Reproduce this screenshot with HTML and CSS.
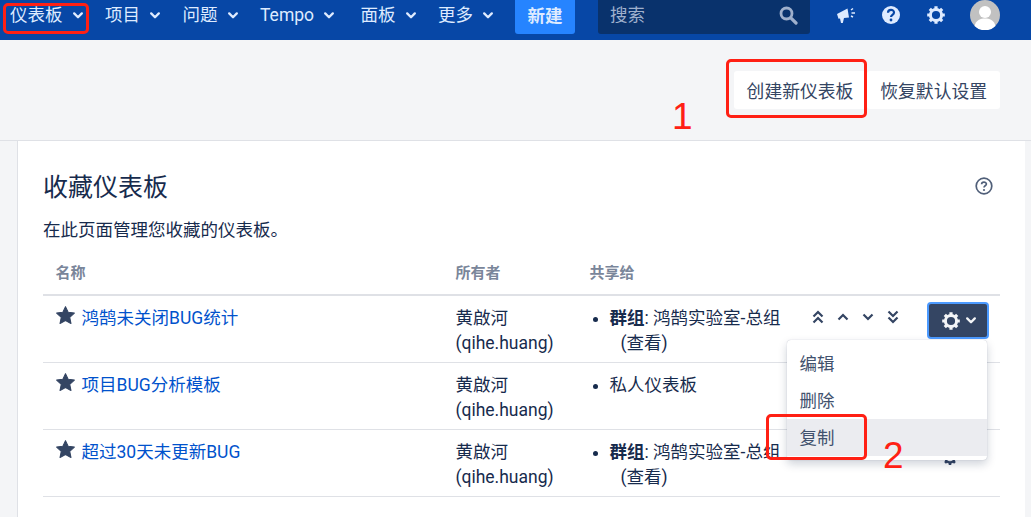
FILE: index.html
```html
<!DOCTYPE html>
<html lang="zh-CN">
<head>
    <meta charset="UTF-8">
    <title>收藏仪表板</title>
    <link rel="stylesheet" href="styles.css">
</head>
<body>
    <svg class="defs" width="0" height="0" aria-hidden="true">
        <symbol id="chev" viewBox="0 0 10 7"><path d="M1.2 1.4 5 5.2l3.8-3.8" fill="none" stroke="currentColor" stroke-width="2.3" stroke-linecap="round" stroke-linejoin="round"/></symbol>
        <symbol id="gear" viewBox="0 0 20 20">
            <circle cx="10" cy="10" r="5.6" fill="none" stroke="currentColor" stroke-width="3"/>
            <path d="M10 1.2v3M10 15.8v3M1.2 10h3M15.8 10h3M3.8 3.8 5.9 5.9M14.1 14.1l2.1 2.1M16.2 3.8l-2.1 2.1M5.9 14.1l-2.1 2.1" stroke="currentColor" stroke-width="3.2"/>
        </symbol>
        <symbol id="star" viewBox="0 0 18 18"><path d="M9 .6l2.5 5.4 5.9.7-4.4 4 1.2 5.9L9 13.7l-5.2 2.9L5 10.7.6 6.7l5.900-.7z" fill="currentColor" stroke="currentColor" stroke-width="1" stroke-linejoin="round"/></symbol>
    </svg>

    <!-- Top navigation -->
    <nav class="topnav">
        <a class="nav-item">仪表板<svg class="chev"><use href="#chev"/></svg></a>
        <a class="nav-item">项目<svg class="chev"><use href="#chev"/></svg></a>
        <a class="nav-item">问题<svg class="chev"><use href="#chev"/></svg></a>
        <a class="nav-item">Tempo<svg class="chev"><use href="#chev"/></svg></a>
        <a class="nav-item nav-panel">面板<svg class="chev"><use href="#chev"/></svg></a>
        <a class="nav-item">更多<svg class="chev"><use href="#chev"/></svg></a>
        <button class="new-btn">新建</button>
        <div class="search">
            <span>搜索</span>
            <svg width="20" height="20" viewBox="0 0 20 20"><circle cx="8.5" cy="8.5" r="5.5" fill="none" stroke="currentColor" stroke-width="2.8"/><path d="M12.8 12.8 18 18" stroke="currentColor" stroke-width="3.2" stroke-linecap="round"/></svg>
        </div>
        <div class="nav-icons">
            <svg width="20" height="20" viewBox="0 0 20 20"><path d="M1 9 11.500 3.500l1.500 9-5 .5L6.800 18H5L4 13.500l-1.500.2z" fill="currentColor"/><path d="M15 5 17 3.500M15.500 8H19M15 11l2 1" stroke="currentColor" stroke-width="1.500" fill="none"/></svg>
            <svg width="20" height="20" viewBox="0 0 20 20"><circle cx="10" cy="10" r="9" fill="currentColor"/><path d="M7 7.800C7 3.800 13 4 13 7.500c0 2.300-3 2.300-3 4.500" fill="none" stroke="#0747a6" stroke-width="2.200"/><circle cx="10" cy="15" r="1.400" fill="#0747a6"/></svg>
            <svg width="20" height="20"><use href="#gear"/></svg>
            <svg class="avatar" width="30" height="30" viewBox="0 0 30 30"><circle cx="15" cy="15" r="15" fill="#c1c1c1"/><circle cx="15" cy="12" r="6" fill="#fff"/><path d="M4.500 26c1.500-6 6-7.500 10.500-7.500S24 20 25.500 26A15 15 0 0 1 4.500 26z" fill="#fff"/></svg>
        </div>
    </nav>

    <!-- Page header with the two actions -->
    <header class="page-head">
        <button class="head-btn">创建新仪表板</button>
        <button class="head-btn">恢复默认设置</button>
    </header>

    <div class="layout">
        <div class="side"></div>
        <main class="main">
            <div class="title-row">
                <h1>收藏仪表板</h1>
                <svg class="help" width="18" height="18" viewBox="0 0 18 18"><circle cx="9" cy="9" r="7.8" fill="none" stroke="currentColor" stroke-width="1.7"/><path d="M6.600 7.200C6.600 4.300 11.400 4.500 11.400 7c0 1.800-2.400 1.800-2.400 3.500" fill="none" stroke="currentColor" stroke-width="1.7"/><circle cx="9" cy="13" r="1.100" fill="currentColor"/></svg>
            </div>
            <p class="desc">在此页面管理您收藏的仪表板。</p>

            <table class="boards">
                <thead>
                    <tr><th class="col-name">名称</th><th class="col-owner">所有者</th><th class="col-share">共享给</th><th class="col-order"></th><th class="col-op"></th></tr>
                </thead>
                <tbody>
                    <tr>
                        <td class="name-cell"><svg class="star"><use href="#star"/></svg><a>鸿鹄未关闭BUG统计</a></td>
                        <td>黄啟河<br>(qihe.huang)</td>
                        <td><ul><li><b>群组</b>: 鸿鹄实验室-总组<span class="perm">(查看)</span></li></ul></td>
                        <td>
                            <div class="order">
                                <svg viewBox="0 0 12 14"><path d="M1.500 6.500 6 2l4.500 4.500M1.500 12.500 6 8l4.500 4.500" fill="none" stroke="currentColor" stroke-width="2.200"/></svg>
                                <svg viewBox="0 0 12 14"><path d="M1.500 9.500 6 5l4.500 4.500" fill="none" stroke="currentColor" stroke-width="2.200"/></svg>
                                <svg viewBox="0 0 12 14"><path d="M1.500 4.500 6 9l4.500-4.500" fill="none" stroke="currentColor" stroke-width="2.200"/></svg>
                                <svg viewBox="0 0 12 14"><path d="M1.500 1.500 6 6l4.500-4.500M1.500 7.500 6 12l4.500-4.500" fill="none" stroke="currentColor" stroke-width="2.200"/></svg>
                            </div>
                        </td>
                        <td class="op-cell">
                            <button class="gear-btn"><svg class="gear-ico"><use href="#gear"/></svg><svg class="chev"><use href="#chev"/></svg></button>
                            <div class="menu">
                                <a>编辑</a>
                                <a>删除</a>
                                <a class="hover">复制</a>
                            </div>
                        </td>
                    </tr>
                    <tr>
                        <td class="name-cell"><svg class="star"><use href="#star"/></svg><a>项目BUG分析模板</a></td>
                        <td>黄啟河<br>(qihe.huang)</td>
                        <td><ul><li>私人仪表板</li></ul></td>
                        <td></td>
                        <td></td>
                    </tr>
                    <tr>
                        <td class="name-cell"><svg class="star"><use href="#star"/></svg><a>超过30天未更新BUG</a></td>
                        <td>黄啟河<br>(qihe.huang)</td>
                        <td><ul><li><b>群组</b>: 鸿鹄实验室-总组<span class="perm">(查看)</span></li></ul></td>
                        <td></td>
                        <td class="op-cell"><svg class="gear-plain"><use href="#gear"/></svg></td>
                    </tr>
                </tbody>
            </table>
        </main>
        <div class="gutter"></div>
    </div>

    <!-- Red annotations on top of the screenshot -->
    <div class="mark mark-nav"></div>
    <div class="mark mark-create"></div>
    <div class="mark mark-copy"></div>
    <div class="num num-1">1</div>
    <div class="num num-2">2</div>
</body>
</html>
```

FILE: styles.css
```css
html, body {
    margin: 0;
    padding: 0;
}

body {
    position: relative;
    width: 1031px;
    height: 517px;
    overflow: hidden;
    font-family: Roboto, "Noto Sans CJK SC", sans-serif;
    font-size: 17.5px;
    line-height: 25px;
    color: #172b4d;
    background-color: #fff;
}

.defs {
    position: absolute;
}

/* Top navigation */
.topnav {
    display: flex;
    align-items: flex-start;
    height: 40px;
    padding-left: 10px;
    background-color: #0747a6;
    color: #deebff;
}

.nav-item {
    display: flex;
    align-items: center;
    height: 31px;
    margin-right: 22.5px;
    white-space: nowrap;
}

.nav-panel {
    margin-left: 4px;
}

.chev {
    width: 10px;
    height: 7px;
    margin-left: 10px;
}

.new-btn {
    width: 60px;
    height: 34px;
    margin-left: -0.5px;
    padding: 0 0 5px;
    border: none;
    border-radius: 0 0 3px 3px;
    background-color: #2684ff;
    color: #deebff;
    font: bold 17.5px Roboto, "Noto Sans CJK SC", sans-serif;
}

.search {
    display: flex;
    align-items: center;
    justify-content: space-between;
    box-sizing: border-box;
    width: 212px;
    height: 34px;
    margin-left: 23px;
    padding: 0 12px 4px;
    border-radius: 0 0 3px 3px;
    background-color: #09326c;
    color: #9fb0cc;
}

.nav-icons {
    display: flex;
    align-items: center;
    height: 30px;
    margin-left: 26px;
    gap: 25px;
}

.avatar {
    margin-left: -1px;
}

/* Header band */
.page-head {
    display: flex;
    align-items: flex-start;
    justify-content: flex-end;
    box-sizing: border-box;
    height: 101px;
    padding: 31px 31px 0 0;
    gap: 1px;
    background-color: #f4f5f7;
    border-bottom: 1px solid #dfe1e6;
}

.head-btn {
    height: 38px;
    padding: 0 13px;
    border: none;
    border-radius: 3px;
    background-color: #fff;
    color: #344563;
    font: 17.8px Roboto, "Noto Sans CJK SC", sans-serif;
}

/* Content */
.layout {
    display: flex;
    height: 376px;
}

.side {
    width: 17px;
    background-color: #f4f5f7;
    border-right: 1px solid #dfe1e6;
}

.gutter {
    width: 6px;
    background-color: #f4f5f7;
}

.main {
    flex: 1;
    padding: 0 25px;
}

.title-row {
    display: flex;
    align-items: center;
    justify-content: space-between;
    height: 34px;
    padding-top: 30px;
}

.help {
    margin-right: 7px;
    margin-top: -4px;
    color: #505f79;
}

h1 {
    margin: 0;
    font-size: 25px;
    font-weight: 400;
    line-height: 34px;
    color: #172b4d;
}

.desc {
    margin: 13px 0 0;
}

/* Table */
.boards {
    width: 100%;
    margin-top: 8px;
    border-collapse: separate;
    border-spacing: 0;
    table-layout: fixed;
}

.boards th {
    height: 45px;
    padding: 2px 12.5px 0;
    box-sizing: border-box;
    border-bottom: 2px solid #dfe1e6;
    color: #7a869a;
    font-size: 15px;
    font-weight: 600;
    text-align: left;
}

.boards td {
    height: 67px;
    box-sizing: border-box;
    padding: 10px 12.5px 6px;
    border-bottom: 1px solid #dfe1e6;
    vertical-align: top;
}

.col-name { width: 400px; }
.col-owner { width: 134px; }
.col-share { width: 220px; }
.col-order { width: 110px; }

.name-cell {
    position: relative;
    white-space: nowrap;
}

.star {
    position: absolute;
    left: 13px;
    top: 10px;
    width: 19px;
    height: 19px;
    color: #344563;
}

.name-cell a {
    margin-left: 26px;
    color: #0052cc;
}

ul {
    margin: 0;
    padding: 0 0 0 20px;
}

b {
    font-weight: 700;
}

li {
    white-space: nowrap;
}

.perm {
    display: block;
    padding-left: 11px;
}

.order {
    display: flex;
    gap: 13px;
    margin-left: 2.5px;
    padding-top: 3px;
    color: #344563;
}

.order svg {
    flex-shrink: 0;
    width: 12px;
    height: 16px;
}

.op-cell {
    position: relative;
}

.gear-btn {
    position: absolute;
    top: 6px;
    right: 11px;
    display: flex;
    align-items: center;
    justify-content: center;
    box-sizing: border-box;
    width: 62px;
    height: 37px;
    padding: 0;
    border: 2px solid #4c9aff;
    border-radius: 4px;
    background-color: #344563;
    color: #f4f5f7;
}

.gear-ico {
    width: 20px;
    height: 20px;
}

.gear-btn .chev {
    margin-left: 5px;
}

.gear-plain {
    position: absolute;
    top: 20px;
    right: 42px;
    width: 16px;
    height: 16px;
    color: #344563;
}

/* Dropdown */
.menu {
    position: absolute;
    top: 44px;
    right: 13px;
    z-index: 5;
    width: 200px;
    box-sizing: border-box;
    padding: 5px 0 4px;
    border-radius: 4px;
    background-color: #fff;
    box-shadow: 0 4px 10px rgba(9, 30, 66, 0.2), 0 0 1px rgba(9, 30, 66, 0.3);
    color: #42526e;
}

.menu a {
    display: block;
    height: 37px;
    padding: 0 12.5px;
    line-height: 39px;
}

.menu .hover {
    background-color: #ebecf0;
}

/* Annotations */
.mark {
    position: absolute;
    z-index: 10;
    box-sizing: border-box;
    border: 3px solid #ff2014;
    border-radius: 5px;
}

.mark-nav {
    left: 3px;
    top: 3px;
    width: 86px;
    height: 31px;
}

.mark-create {
    left: 726px;
    top: 59px;
    width: 141px;
    height: 59px;
}

.mark-copy {
    left: 766px;
    top: 414px;
    width: 101px;
    height: 46px;
}

.num {
    position: absolute;
    z-index: 10;
    color: #ff2014;
    font-family: "Liberation Sans", sans-serif;
    font-size: 37px;
    line-height: 40px;
}

.num-1 {
    left: 672px;
    top: 97px;
}

.num-2 {
    left: 883px;
    top: 436px;
}
```
